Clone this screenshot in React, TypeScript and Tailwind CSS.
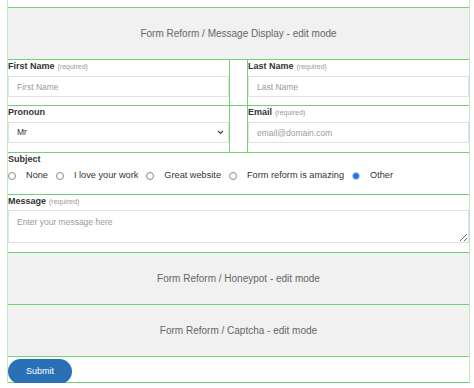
import React from 'react';

const line = 'border-t border-t-[#70d270]';

function EditBlock({ title, h }: { title: string; h: string }) {
  return (
    <div className={`${line} ${h} bg-[#f1f1f1] flex items-center justify-center text-[10px] text-[#666]`}>
      {title}
    </div>
  );
}

function Label({ text, required }: { text: string; required?: boolean }) {
  return (
    <div className="h-[13px] flex items-center text-[9px] font-bold text-[#333] leading-none">
      {text}
      {required && <span className="ml-[3px] text-[7px] font-normal text-[#999]">(required)</span>}
    </div>
  );
}

function TextField({ placeholder }: { placeholder: string }) {
  return (
    <input
      placeholder={placeholder}
      className="mt-[3px] block w-full h-[21px] border border-[#e2e2e2] px-[8px] text-[8.5px] text-[#333] placeholder:text-[#9a9a9a] outline-none"
    />
  );
}

const subjects = ['None', 'I love your work', 'Great website', 'Form reform is amazing', 'Other'];

export default function App() {
  return (
    <div
      className="ml-[7px] w-[463px] border-x border-[#bfe9bf] pt-[7px] bg-white"
      style={{ fontFamily: '"Liberation Sans", Arial, sans-serif' }}
    >
      <EditBlock title="Form Reform / Message Display - edit mode" h="h-[52px]" />

      <div className={`${line} h-[46px] flex justify-between`}>
        <div className="w-[222px] border-r border-r-[#70d270]">
          <Label text="First Name" required />
          <TextField placeholder="First Name" />
        </div>
        <div className="w-[222px] border-l border-l-[#70d270]">
          <Label text="Last Name" required />
          <TextField placeholder="Last Name" />
        </div>
      </div>

      <div className={`${line} h-[47px] flex justify-between`}>
        <div className="w-[222px] border-r border-r-[#70d270]">
          <Label text="Pronoun" />
          <div className="relative mt-[3px]">
            <select className="block w-full h-[21px] appearance-none border border-[#e2e2e2] bg-white px-[8px] text-[8.5px] text-[#333] outline-none">
              <option>Mr</option>
              <option>Mrs</option>
              <option>Ms</option>
            </select>
            <svg className="absolute right-[5px] top-[8px] w-[7px] h-[5px]" viewBox="0 0 7 5" fill="none">
              <path d="M1 1l2.5 2.5L6 1" stroke="#444" strokeWidth="1.2" />
            </svg>
          </div>
        </div>
        <div className="w-[222px] border-l border-l-[#70d270]">
          <Label text="Email" required />
          <TextField placeholder="email@domain.com" />
        </div>
      </div>

      <div className={`${line} h-[42px]`}>
        <Label text="Subject" />
        <div className="mt-[2px] flex items-center h-[16px] text-[9.2px] text-[#333]">
          {subjects.map((s) => {
            const checked = s === 'Other';
            return (
              <label key={s} className="flex items-center mr-[8px]">
                {checked ? (
                  <span className="w-[8px] h-[8px] rounded-full bg-[#1a73e8] border-[1.5px] border-[#bcd4f7]" />
                ) : (
                  <span className="w-[8px] h-[8px] rounded-full border border-[#8a8a8a] bg-white" />
                )}
                <span className="ml-[10px]">{s}</span>
              </label>
            );
          })}
        </div>
      </div>

      <div className={`${line} h-[58px]`}>
        <Label text="Message" required />
        <textarea
          placeholder="Enter your message here"
          className="mt-[2px] block w-full h-[33px] border border-[#e2e2e2] px-[8px] py-[5px] text-[8.5px] text-[#333] placeholder:text-[#9a9a9a] outline-none"
        />
      </div>

      <EditBlock title="Form Reform / Honeypot - edit mode" h="h-[52px]" />
      <EditBlock title="Form Reform / Captcha - edit mode" h="h-[52px]" />

      <div className={`${line} border-b border-b-[#70d270] h-[27px]`}>
        <button className="w-[64px] h-[25px] rounded-full bg-[#2a70b5] text-white text-[9px]">Submit</button>
      </div>
    </div>
  );
}
